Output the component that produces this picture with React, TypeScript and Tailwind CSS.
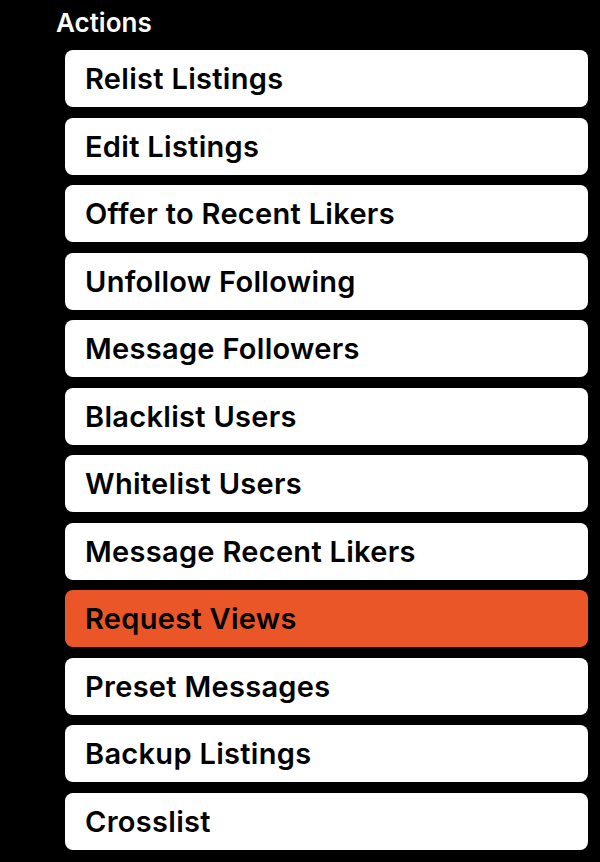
const actions = [
  'Relist Listings',
  'Edit Listings',
  'Offer to Recent Likers',
  'Unfollow Following',
  'Message Followers',
  'Blacklist Users',
  'Whitelist Users',
  'Message Recent Likers',
  'Request Views',
  'Preset Messages',
  'Backup Listings',
  'Crosslist',
];

const active = 'Request Views';

export default function App() {
  return (
    <div
      className="h-[862px] w-[600px] overflow-hidden bg-black pl-[56px] pt-[10px]"
      style={{ fontFamily: 'Inter, "Liberation Sans", Arial, sans-serif' }}
    >
      <h2 className="text-[26px] font-semibold leading-none text-white">Actions</h2>
      <ul className="ml-[9px] mt-[14px] flex w-[523px] flex-col gap-[10.5px]">
        {actions.map((a) => (
          <li key={a}>
            <button
              className={
                'flex h-[57px] w-full items-center rounded-[8px] pl-[20px] text-left text-[29px] font-semibold leading-none tracking-[0.3px] text-black ' +
                (a === active ? 'bg-[#eb5629]' : 'bg-white')
              }
            >
              {a}
            </button>
          </li>
        ))}
      </ul>
    </div>
  );
}
